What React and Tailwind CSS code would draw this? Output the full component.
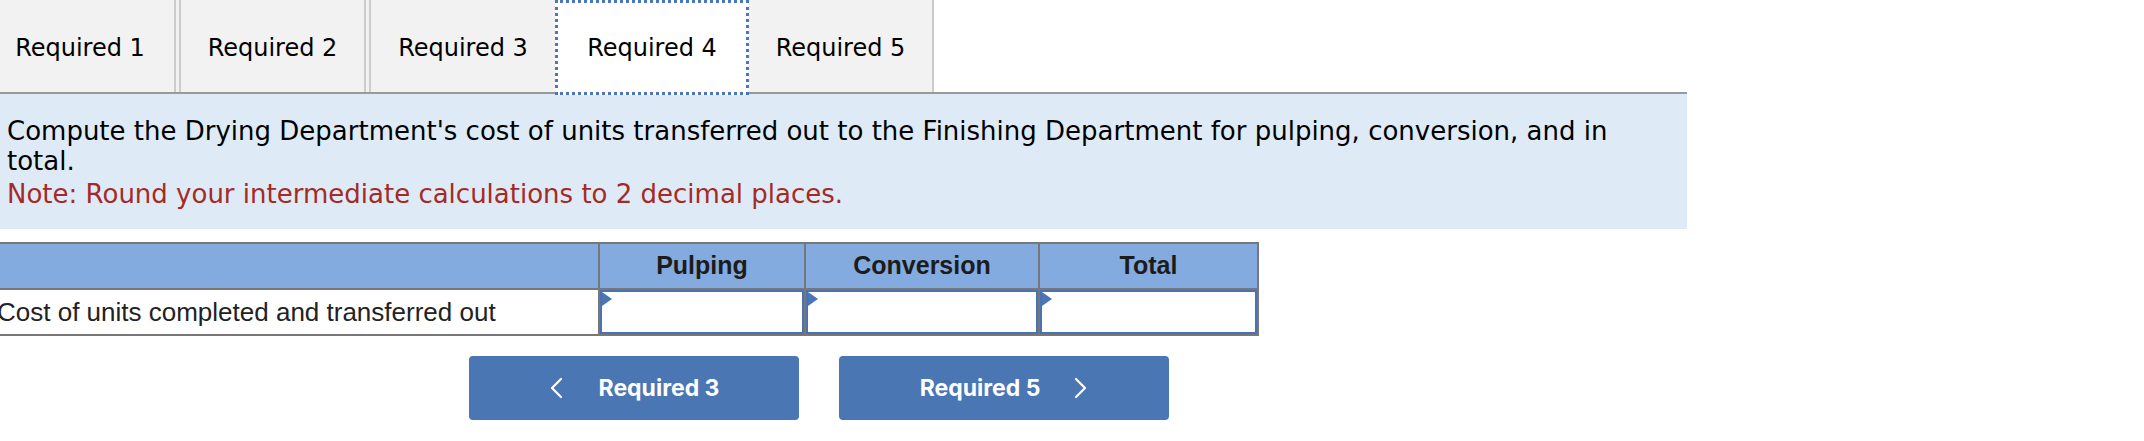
import React from 'react';

const tabFont = { fontFamily: '"DejaVu Sans", Verdana, sans-serif' };

function Tab({ label, className }) {
  return (
    <div
      className={`flex h-[92px] items-center justify-center pt-[3px] text-[24px] text-black ${className}`}
      style={tabFont}
    >
      {label}
    </div>
  );
}

function Chevron({ dir }) {
  return (
    <svg width="14" height="22" viewBox="0 0 14 22" fill="none" stroke="white" strokeWidth="2.2" strokeLinecap="round" strokeLinejoin="round">
      {dir === 'left' ? <polyline points="12,2 3,11 12,20" /> : <polyline points="2,2 11,11 2,20" />}
    </svg>
  );
}

function AnswerCell({ width }) {
  return (
    <div className={`relative h-full border-l-2 border-[#777777] ${width}`}>
      <div className="h-full w-full border-2 border-[#4a72b2] bg-white" />
      {/* little marker in the corner of each input */}
      <div className="absolute left-[2px] top-[2px] h-0 w-0 border-y-[7px] border-l-[10px] border-y-transparent border-l-[#4a76b8]" />
    </div>
  );
}

export default function App() {
  return (
    <div className="h-[441px] w-[2144px] overflow-hidden bg-white">
      {/* tabs + instructions */}
      <div className="w-[1687px]">
        <div className="flex border-b-2 border-[#999999]">
          <div className="flex bg-[#f2f2f2]">
            <Tab label="Required 1" className="w-[176px] border-r-2 border-[#cccccc] pr-[14px]" />
            <Tab label="Required 2" className="ml-[3px] w-[187px] border-x-2 border-[#cccccc]" />
            <Tab label="Required 3" className="ml-[3px] w-[186px] border-l-2 border-[#cccccc]" />
            <Tab
              label="Required 4"
              className="relative z-10 -mb-[3px] h-[95px] w-[194px] border-[3px] border-dotted border-[#4a76c0] bg-white pb-[3px]"
            />
            <Tab label="Required 5" className="w-[185px] border-r-2 border-[#cccccc]" />
          </div>
        </div>

        <div
          className="h-[135px] bg-[#deebf7] pl-[7px] pr-[24px] pt-[22px] text-[26px] leading-[30px] text-black"
          style={tabFont}
        >
          <p>
            Compute the Drying Department's cost of units transferred out to the Finishing Department for pulping, conversion, and in total.
          </p>
          <p className="mt-[3px] text-[#a52a26]">Note: Round your intermediate calculations to 2 decimal places.</p>
        </div>
      </div>

      {/* answer table */}
      <div
        className="mt-[13px] w-[1259px] border-r-2 border-[#777777]"
        style={{ fontFamily: '"Liberation Sans", Arial, sans-serif' }}
      >
        <div className="flex h-[48px] border-y-2 border-[#777777] bg-[#84abdf] text-[25px] font-bold text-[#1c1c1c]">
          <div className="w-[598px]" />
          <div className="flex w-[206px] items-center justify-center border-l-2 border-[#777777]">Pulping</div>
          <div className="flex w-[234px] items-center justify-center border-l-2 border-[#777777]">Conversion</div>
          <div className="flex w-[219px] items-center justify-center border-l-2 border-[#777777]">Total</div>
        </div>
        <div className="flex h-[46px] border-b-2 border-[#777777]">
          <div className="flex w-[598px] items-center whitespace-nowrap text-[26px] text-[#222222]">
            <span className="-ml-[3px]">Cost of units completed and transferred out</span>
          </div>
          <AnswerCell width="w-[206px]" />
          <AnswerCell width="w-[234px]" />
          <AnswerCell width="w-[219px]" />
        </div>
      </div>

      {/* prev / next */}
      <div
        className="ml-[469px] mt-[20px] flex gap-[40px] text-[23px] font-bold text-white"
        style={{ fontFamily: 'Inter, "Noto Sans", sans-serif' }}
      >
        <button className="flex h-[64px] w-[330px] items-center justify-center gap-[36px] rounded-[4px] bg-[#4a76b4]">
          <Chevron dir="left" />
          <span>Required 3</span>
        </button>
        <button className="flex h-[64px] w-[330px] items-center justify-center gap-[34px] rounded-[4px] bg-[#4a76b4]">
          <span>Required 5</span>
          <Chevron dir="right" />
        </button>
      </div>
    </div>
  );
}
